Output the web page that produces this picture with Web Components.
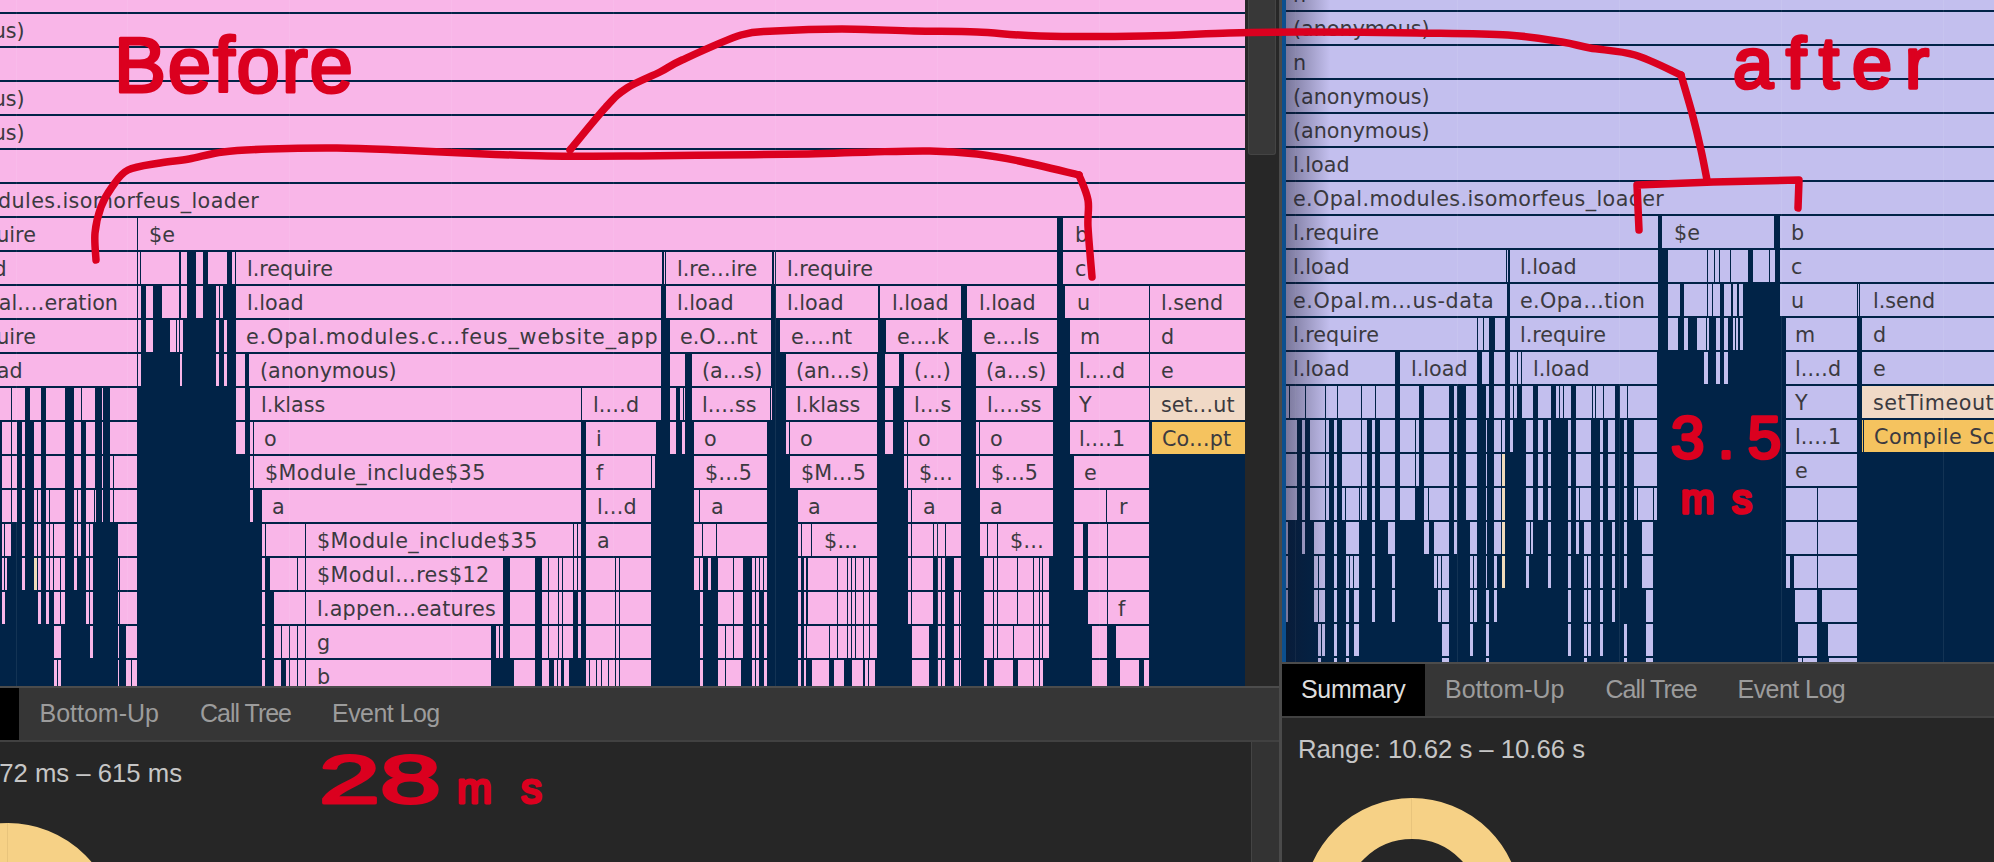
<!DOCTYPE html>
<html>
<head>
<meta charset="utf-8">
<title>Flame chart before and after</title>
<style>
  html, body { margin: 0; height: 100%; background: #262626; }
  body { display: flex; width: 1994px; height: 862px; overflow: hidden; position: relative; }
</style>
</head>
<body>

<perf-panel width="1279">
  <flame-chart slot="chart" height="686" shift="-20" origin="0" style="--bar:#f9b6e8">
    <flame-row spans="-120-1245"></flame-row>
    <flame-row spans="-120-1245@-112=(anonymous)"></flame-row>
    <flame-row spans="-120-1245"></flame-row>
    <flame-row spans="-120-1245@-112=(anonymous)"></flame-row>
    <flame-row spans="-120-1245@-112=(anonymous)"></flame-row>
    <flame-row spans="-120-1245"></flame-row>
    <flame-row spans="-120-1245@-112=e.Opal.modules.isomorfeus_loader"></flame-row>
    <flame-row spans="-120-137@-50=l.require 138-1057@149=$e 1063-1245@1075=b"></flame-row>
    <flame-row spans="-120-137@-50=l.load 138-140 141-179 181-187 196-203 208-227 232-235 236-662@247=l.require 664-665 666-772@677=l.re…ire 774-775 776-1057@787=l.require 1063-1245@1075=c"></flame-row>
    <flame-row spans="-120-137@-50=e.Opal.…eration 138-141 146-153 162-179 181-187 196-203 216-219 220-223 236-661@247=l.load 666-771@677=l.load 776-878@787=l.load 880-961@892=l.load 967-1057@979=l.load 1065-1149@1077=u 1150-1245@1161=l.send"></flame-row>
    <flame-row spans="-120-137@-50=l.require 138-141 146-153 170-176 177-179 180-183 216-219 224-227 236-661@246=e.Opal.modules.c…feus_website_app 670-771@680=e.O…nt 780-878@791=e.…nt 886-962@897=e.…k 972-1057@983=e.…ls 1070-1149@1080=m 1150-1245@1161=d"></flame-row>
    <flame-row spans="-120-137@-34=l.load 138-141 180-182 216-219 224-227 236-245 249-661@260=(anonymous) 670-685 692-771@702=(a…s) 786-877@796=(an…s) 885-899 904-961@914=(…) 976-1057@986=(a…s) 1070-1149@1079=l.…d 1150-1245@1161=e"></flame-row>
    <flame-row spans="0-11 12-25 30-41 46-65 74-81 82-95 102-103 110-137 236-245 250-581@261=l.klass 582-661@593=l.…d 670-676 680-683 684-685 692-770@702=l.…ss 771-772 786-877@796=l.klass 885-893 904-961@914=l…s 976-1053@987=l.…ss 1070-1149@1079=Y c:1150-1245@1161=set…ut"></flame-row>
    <flame-row spans="2-11 12-17 22-25 34-41 46-65 74-81 86-95 102-103 110-137 236-245 250-253 254-581@264=o 586-656@596=i 670-676 682-685 694-767@704=o 786-789 790-877@800=o 885-893 904-907 908-961@918=o 976-979 980-1053@990=o 1070-1149@1079=l.…1 o:1152-1245@1162=Co…pt"></flame-row>
    <flame-row spans="2-11 12-17 22-25 34-41 46-65 74-81 86-95 102-103 110-113 114-137 250-253 254-581@265=$Module_include$35 586-651@596=f 652-655 694-767@705=$…5 790-877@801=$M…5 904-907 908-961@919=$… 976-979 980-1053@991=$…5 1074-1149@1084=e"></flame-row>
    <flame-row spans="2-11 12-17 22-25 34-37 38-41 46-49 50-65 74-77 78-81 86-94 95-96 102-103 110-113 114-137 250-253 262-581@272=a 586-651@597=l…d 694-699 700-767@711=a 798-877@808=a 908-911 912-961@923=a 980-1053@990=a 1074-1106 1107-1149@1119=r"></flame-row>
    <flame-row spans="2-4 5-11 22-25 34-37 38-41 46-49 50-53 54-65 74-77 78-81 86-89 90-93 118-137 262-265 266-305 306-573@317=$Module_include$35 574-577 578-581 586-651@597=a 694-702 703-716 717-767 798-801 802-811 812-877@824=$… 908-911 912-933 934-937 938-945 946-961 980-987 988-997 998-1053@1010=$… 1074-1083 1088-1107 1108-1149"></flame-row>
    <flame-row spans="2-4 5-7 22-25 y:34-37 38-41 46-49 50-53 54-60 61-65 74-77 86-89 90-93 118-119 120-137 262-265 270-297 298-305 306-503@317=$Modul…res$12 510-535 542-548 549-558 559-562 563-573 574-577 578-581 586-615 616-619 620-651 694-699 700-703 708-711 718-733 734-743 752-755 756-759 760-763 764-767 798-801 804-806 808-837 838-847 848-851 852-855 856-863 864-869 870-877 908-911 912-933 938-941 942-945 954-961 984-993 994-997 998-1017 1018-1033 1034-1039 1040-1042 1043-1049 1074-1083 1088-1107 1108-1149"></flame-row>
    <flame-row spans="2-5 38-41 46-49 54-60 61-65 86-89 90-93 118-119 120-137 262-265 274-305 306-503@317=l.appen…eatures 510-535 542-548 549-558 559-562 563-573 578-581 586-615 616-619 620-651 700-703 718-733 734-743 752-755 756-759 764-767 798-801 804-806 808-837 838-847 848-851 852-855 856-863 864-869 870-877 908-911 912-933 938-941 942-945 954-959 960-961 984-993 994-997 998-1017 1018-1033 1034-1039 1040-1042 1043-1049 1088-1107 1108-1149@1118=f"></flame-row>
    <flame-row spans="54-61 90-93 118-119 126-137 262-265 274-281 282-289 290-297 298-305 306-491@317=g 496-499 500-503 510-535 542-548 549-558 559-562 563-573 578-581 586-615 616-619 620-651 700-703 718-725 726-733 734-743 752-755 756-759 764-767 798-801 804-806 807-829 830-837 838-847 848-851 852-855 856-863 864-869 870-877 912-929 938-941 942-945 954-959 960-961 984-993 994-997 998-1013 1014-1033 1034-1039 1040-1042 1043-1049 1092-1107 1116-1149"></flame-row>
    <flame-row spans="54-57 58-61 118-119 126-131 132-137 262-265 274-281 286-289 290-297 298-305 306-491@317=b 514-535 542-549 554-557 558-561 564-569 586-589 590-596 597-601 602-608 609-615 616-619 620-651 700-703 718-725 726-741 752-755 756-759 764-767 798-801 804-806 812-829 834-844 852-863 865-868 869-875 912-929 938-941 942-945 954-959 960-961 984-987 994-1013 1018-1033 1034-1039 1040-1043 1092-1107 1120-1139 1144-1149"></flame-row>
  </flame-chart>
  <scroll-track slot="scroll" thumb="155"></scroll-track>
  <tab-bar slot="tabs" height="52">
    <span class="stub"></span>
    <tab-item>Bottom-Up</tab-item>
    <tab-item style="letter-spacing:-1px">Call Tree</tab-item>
    <tab-item style="letter-spacing:-.55px">Event Log</tab-item>
  </tab-bar>
  <summary-pane slot="summary" side="left" range="Range: 572 ms – 615 ms"></summary-pane>
</perf-panel>

<split-line></split-line>

<perf-panel width="712">
  <flame-chart slot="chart" height="662" shift="-22" origin="1286" edge style="--bar:#c3bfee">
    <flame-row spans="1286-1994@1293=n"></flame-row>
    <flame-row spans="1286-1994@1293=(anonymous)"></flame-row>
    <flame-row spans="1286-1994@1293=n"></flame-row>
    <flame-row spans="1286-1994@1293=(anonymous)"></flame-row>
    <flame-row spans="1286-1994@1293=(anonymous)"></flame-row>
    <flame-row spans="1286-1994@1293=l.load"></flame-row>
    <flame-row spans="1286-1994@1293=e.Opal.modules.isomorfeus_loader"></flame-row>
    <flame-row spans="1286-1658@1293=l.require 1662-1774@1674=$e 1780-1994@1791=b"></flame-row>
    <flame-row spans="1286-1506@1293=l.load 1507-1508 1510-1658@1520=l.load 1668-1707 1708-1714 1715-1719 1720-1730 1731-1748 1753-1769 1770-1775 1780-1994@1791=c"></flame-row>
    <flame-row spans="1286-1507@1293=e.Opal.m…us-data 1510-1658@1520=e.Opa…tion 1668-1680 1684-1707 1708-1712 1713-1720 1724-1731 1733-1737 1739-1743 1780-1857@1791=u 1858-1859 1860-1994@1873=l.send"></flame-row>
    <flame-row spans="1286-1477@1293=l.require 1478-1483 1484-1489 1495-1505 1510-1658@1520=l.require 1668-1678 1684-1688 1697-1706 1707-1709 1716-1720 1724-1728 1733-1735 1736-1738 1740-1743 1786-1857@1795=m 1862-1994@1873=d"></flame-row>
    <flame-row spans="1286-1395@1293=l.load 1400-1477@1411=l.load 1482-1489 1494-1505 1510-1517 1518-1521 1522-1657@1533=l.load 1704-1708 1716-1720 1724-1728 1786-1857@1795=l.…d 1862-1994@1873=e"></flame-row>
    <flame-row spans="1286-1289 1290-1305 1306-1325 1326-1337 1338-1361 1362-1375 1376-1395 1400-1419 1424-1449 1454-1457 1466-1477 1486-1489 1494-1505 1510-1513 1514-1517 1522-1533 1538-1551 1556-1559 1560-1563 1564-1571 1576-1592 1593-1595 1596-1603 1604-1615 1620-1627 1628-1657 1786-1857@1795=Y c:1862-1994@1873=setTimeout"></flame-row>
    <flame-row spans="1286-1297 1302-1305 1310-1325 1326-1329 1334-1337 1342-1361 1362-1367 1372-1375 1380-1395 1400-1415 1416-1419 1424-1449 1454-1457 1466-1477 1486-1487 1494-1501 1502-1505 1510-1513 1526-1533 1538-1543 1548-1551 1568-1571 1576-1591 1600-1603 1608-1615 1624-1627 1634-1657 1786-1857@1795=l.…1 o:1862-1863 o:1864-1994@1874=Compile~Script"></flame-row>
    <flame-row spans="1286-1297 1302-1305 1310-1325 1326-1329 1334-1337 1342-1361 1362-1367 1372-1375 1380-1395 1400-1415 1416-1419 1424-1449 1454-1457 1466-1477 1486-1487 1494-1501 y:1502-1505 1526-1533 1538-1543 1548-1551 1568-1571 1576-1591 1600-1603 1608-1615 1624-1627 1634-1657 1786-1857@1795=e"></flame-row>
    <flame-row spans="1286-1297 1302-1305 1310-1325 1326-1329 1334-1337 1342-1345 1346-1359 1360-1361 1362-1367 1372-1375 1380-1395 1400-1415 1424-1428 1429-1449 1454-1457 1466-1477 1486-1487 1494-1501 y:1502-1505 1526-1533 1538-1543 1548-1551 1568-1571 1576-1579 1580-1591 1600-1603 1608-1615 1624-1627 1634-1637 1638-1653 1654-1657 1786-1817 1818-1857"></flame-row>
    <flame-row spans="1286-1288 1302-1305 1314-1325 1334-1337 1346-1359 1372-1375 1388-1395 1424-1429 1434-1449 1454-1457 1470-1477 1486-1487 1494-1501 y:1502-1505 1526-1530 1531-1533 1548-1551 1568-1571 1576-1579 1584-1591 1600-1603 1612-1615 1624-1627 1642-1653 1786-1817 1818-1857"></flame-row>
    <flame-row spans="1286-1288 1314-1318 1319-1325 1334-1337 1346-1349 1350-1353 1354-1359 1372-1375 1392-1395 1434-1437 1438-1441 1442-1449 1470-1473 1474-1477 1486-1487 1494-1497 y:1502-1505 1526-1529 1548-1551 1568-1571 1584-1587 1588-1591 1600-1603 1612-1615 1624-1627 1642-1653 1786-1790 1794-1817 1818-1857"></flame-row>
    <flame-row spans="1286-1288 1314-1318 1319-1325 1334-1337 1346-1349 1354-1359 1372-1375 1392-1395 1438-1441 1442-1449 1470-1473 1474-1477 1486-1489 1494-1497 1568-1571 1584-1587 1588-1591 1600-1603 1612-1615 1646-1653 1795-1817 1822-1857"></flame-row>
    <flame-row spans="1318-1321 1322-1325 1334-1337 1346-1349 1354-1359 1442-1449 1470-1473 1486-1489 1568-1571 1584-1587 1588-1591 1600-1603 1624-1627 1646-1653 1798-1817 1828-1857"></flame-row>
    <flame-row spans="1318-1321 1334-1337 1346-1349 1442-1449 1486-1489 1584-1587 1624-1627 1646-1653 1798-1802 1803-1817 1829-1857"></flame-row>
  </flame-chart>
  <tab-bar slot="tabs" height="52">
    <tab-item active style="letter-spacing:-.35px">Summary</tab-item>
    <tab-item>Bottom-Up</tab-item>
    <tab-item style="letter-spacing:-1px">Call Tree</tab-item>
    <tab-item style="letter-spacing:-.55px">Event Log</tab-item>
  </tab-bar>
  <summary-pane slot="summary" side="right" range="Range: 10.62 s – 10.66 s"></summary-pane>
</perf-panel>

<ink-notes></ink-notes>

<script>
// the chart font runs narrower than the original on long names
const TRACKING = {
  'e.Opal.modules.isomorfeus_loader': .39,
  'e.Opal.modules.c…feus_website_app': .85,
  '$Module_include$35': .42,
  '$Modul…res$12': .4,
  'l.appen…eatures': .2,
  'e.Opal.m…us-data': .55,
  'e.Opa…tion': .35,
  'Compile Script': .5,
  'setTimeout': .5
};

class PerfPanel extends HTMLElement {
  connectedCallback() {
    if (this.shadowRoot) return;
    this.attachShadow({ mode: 'open' });
    this.shadowRoot.innerHTML = `
      <style>
        :host { display: flex; flex-direction: column; flex: none; height: 862px; overflow: hidden; width: ${this.getAttribute('width')}px; }
        .top { display: flex; flex: none; }
      </style>
      <div class="top"><slot name="chart"></slot><slot name="scroll"></slot></div>
      <slot name="tabs"></slot>
      <slot name="summary"></slot>`;
  }
}

class FlameChart extends HTMLElement {
  connectedCallback() {
    if (this.shadowRoot) return;
    const edge = this.hasAttribute('edge');
    this.attachShadow({ mode: 'open' });
    // the faint time grid and the drop shadow lie over the bars
    this.shadowRoot.innerHTML = `
      <style>
        :host {
          display: block; flex: 1; min-width: 0; position: relative; overflow: hidden;
          height: ${this.getAttribute('height')}px;
          background: #012347;
          box-sizing: border-box;
          ${edge ? 'border-left: 4px solid #0c4f8e;' : ''}
        }
        .rows { margin-top: ${this.getAttribute('shift')}px; }
        .grid {
          position: absolute; inset: 0; pointer-events: none;
          background: repeating-linear-gradient(90deg,
            rgba(255,255,255,.07) 0 1px, transparent 1px 162px);
          background-position: ${edge ? '9px' : '127px'} 0;
        }
        .shade {
          position: absolute; top: 0; bottom: 0; left: 0; width: 44px; pointer-events: none;
          background: linear-gradient(90deg, rgba(20,20,40,.42), rgba(20,20,40,0));
        }
      </style>
      <div class="rows"><slot></slot></div>
      <div class="grid"></div>
      ${edge ? '<div class="shade"></div>' : ''}`;
  }
}

class FlameRow extends HTMLElement {
  connectedCallback() {
    if (this.shadowRoot) return;
    const origin = Number(this.parentElement.getAttribute('origin'));
    const spans = this.getAttribute('spans').trim().split(/\s+/);
    let cursor = origin;
    let html = '';
    for (const s of spans) {
      const m = s.match(/^(?:([cyo]):)?(-?\d+)-(\d+)(?:@(-?\d+)=(.*))?$/);
      const a = Number(m[2]), b = Number(m[3]);
      const kind = m[1] || '';
      const label = m[5] ? m[5].replace(/~/g, ' ') : '';
      const pad = m[4] ? Number(m[4]) - a : 0;
      const track = TRACKING[label] || 0;
      html += `<div class="bar ${kind}" style="margin-left:${a - cursor}px;width:${b - a}px;padding-left:${pad}px;letter-spacing:${track}px">${label}</div>`;
      cursor = b;
    }
    this.attachShadow({ mode: 'open' });
    this.shadowRoot.innerHTML = `
      <style>
        :host { display: flex; height: 32px; margin-bottom: 2px; }
        .bar {
          flex: none; box-sizing: border-box; height: 32px; overflow: hidden; white-space: nowrap;
          background: var(--bar); color: #3b3a40;
          font: 20.7px/35px "DejaVu Sans", sans-serif;
        }
        .c { background: #f0d9c6; }
        .o { background: #f5c35f; }
        .y { background: #f1dcbc; }
      </style>
      ${html}`;
  }
}

class ScrollTrack extends HTMLElement {
  connectedCallback() {
    if (this.shadowRoot) return;
    this.attachShadow({ mode: 'open' });
    this.shadowRoot.innerHTML = `
      <style>
        :host { display: block; flex: none; width: 34px; box-sizing: border-box; padding: 0 3px; background: #272727; }
        .thumb { height: ${this.getAttribute('thumb')}px; background: #383838; border: 1px solid #444; border-top: 0; border-radius: 0 0 3px 3px; box-sizing: border-box; }
      </style>
      <div class="thumb"></div>`;
  }
}

class TabBar extends HTMLElement {
  connectedCallback() {
    if (this.shadowRoot) return;
    this.attachShadow({ mode: 'open' });
    this.shadowRoot.innerHTML = `
      <style>
        :host {
          display: flex; flex: none; height: ${this.getAttribute('height')}px;
          background: #363636;
          border-top: 2px solid #4c4c4c; border-bottom: 2px solid #414141;
        }
        ::slotted(.stub) { flex: none; width: 19px; background: #000; }
      </style>
      <slot></slot>`;
  }
}

class TabItem extends HTMLElement {
  connectedCallback() {
    if (this.shadowRoot) return;
    this.attachShadow({ mode: 'open' });
    this.shadowRoot.innerHTML = `
      <style>
        :host {
          display: flex; align-items: center; flex: none; padding: 0 20.5px 2px;
          font: 25px "Liberation Sans", Arial, sans-serif; color: #9c9c9c;
        }
        :host([active]) { background: #000; color: #dedede; padding: 0 19px 2px; }
      </style>
      <slot></slot>`;
  }
}

class SummaryPane extends HTMLElement {
  connectedCallback() {
    if (this.shadowRoot) return;
    const left = this.getAttribute('side') === 'left';
    this.attachShadow({ mode: 'open' });
    this.shadowRoot.innerHTML = `
      <style>
        :host { display: flex; flex: 1; background: #262626; overflow: hidden; min-height: 0; }
        .body { flex: 1; min-width: 0; padding-top: 16px; }
        .range {
          font: 25.7px/30px "Liberation Sans", Arial, sans-serif; color: #c6c6c6; white-space: nowrap;
          margin-left: ${left ? '-105px' : '16px'};
        }
        .donut {
          width: 218px; height: 218px; box-sizing: border-box; border-radius: 50%;
          border: 41px solid #f6d186; position: relative;
          margin: ${left ? '35px 0 0 -101px' : '34px 0 0 21px'};
        }
        .donut::after { content: ""; position: absolute; left: 67px; top: -41px; width: 1px; height: 41px; background: #e8c47c; }
        .bar { flex: none; width: 27px; background: #333; border-left: 1px solid #444; }
      </style>
      <div class="body">
        <div class="range">${this.getAttribute('range')}</div>
        <div class="donut"></div>
      </div>
      ${left ? '<div class="bar"></div>' : ''}`;
  }
}

class SplitLine extends HTMLElement {
  connectedCallback() {
    if (this.shadowRoot) return;
    this.attachShadow({ mode: 'open' });
    this.shadowRoot.innerHTML = `
      <style>
        :host { display: block; flex: none; width: 3px; height: 862px; background: #4a4a4a; }
      </style>`;
  }
}

// catmull-rom through the traced points, so the marker lines stay soft
function smooth(pts) {
  let d = `M${pts[0][0]} ${pts[0][1]}`;
  for (let i = 0; i < pts.length - 1; i++) {
    const p0 = pts[i - 1] || pts[i], p1 = pts[i], p2 = pts[i + 1], p3 = pts[i + 2] || p2;
    const c1 = [p1[0] + (p2[0] - p0[0]) / 6, p1[1] + (p2[1] - p0[1]) / 6];
    const c2 = [p2[0] - (p3[0] - p1[0]) / 6, p2[1] - (p3[1] - p1[1]) / 6];
    d += ` C${c1[0]} ${c1[1]} ${c2[0]} ${c2[1]} ${p2[0]} ${p2[1]}`;
  }
  return d;
}

const LEFT_BRACE = [[96,260],[95,233],[101,207],[112,187],[128,170],[160,163],[189,159],[223,152],[269,149],[337,148],[400,150],[463,153],[547,156],[640,156],[724,155],[808,154],[871,152],[930,151],[977,154],[1019,161],[1079,175]];
const LEFT_DROP = [[1079,175],[1088,200],[1088,227],[1092,277]];
const LINK = [[570,150],[606,107],[627,88],[660,72],[682,60],[741,35],[775,31],[842,29],[914,31],[977,32],[1040,36],[1145,36],[1229,33],[1300,32],[1417,33],[1508,35],[1562,42],[1590,48],[1635,55],[1681,75]];
const LINK_DROP = [[1681,75],[1692,113],[1701,150],[1707,180]];

// red marker scribbles drawn over the whole screenshot
class InkNotes extends HTMLElement {
  connectedCallback() {
    if (this.shadowRoot) return;
    this.attachShadow({ mode: 'open' });
    this.shadowRoot.innerHTML = `
      <style>
        :host { position: absolute; inset: 0; display: block; pointer-events: none; }
        svg { display: block; }
        path { fill: none; stroke: #db001f; stroke-width: 7.5; stroke-linecap: round; stroke-linejoin: round; }
        text { fill: #db001f; stroke: #db001f; stroke-linejoin: round; font-family: "Liberation Sans", Arial, sans-serif; }
      </style>
      <svg width="1994" height="862" viewBox="0 0 1994 862">
        <path d="${smooth(LEFT_BRACE)}"/>
        <path d="${smooth(LEFT_DROP)}"/>
        <path d="${smooth(LINK)}"/>
        <path d="${smooth(LINK_DROP)}"/>
        <path d="M1639 230 L1637 185 L1713 182 L1799 180 L1798 208"/>
        <text x="114" y="92" font-size="78" stroke-width="3" textLength="239">Before</text>
        <text x="1733" y="88" font-size="72" stroke-width="3.5" textLength="196">after</text>
        <text x="319" y="803" font-size="68" stroke-width="3" textLength="122" lengthAdjust="spacingAndGlyphs">28</text>
        <text x="457" y="803" font-size="42" stroke-width="3" textLength="85">ms</text>
        <text x="1671" y="458" font-size="60" stroke-width="3.5" textLength="110">3.5</text>
        <text x="1681" y="513" font-size="40" stroke-width="3.5" textLength="71">ms</text>
      </svg>`;
  }
}

customElements.define('perf-panel', PerfPanel);
customElements.define('flame-chart', FlameChart);
customElements.define('flame-row', FlameRow);
customElements.define('scroll-track', ScrollTrack);
customElements.define('tab-bar', TabBar);
customElements.define('tab-item', TabItem);
customElements.define('summary-pane', SummaryPane);
customElements.define('split-line', SplitLine);
customElements.define('ink-notes', InkNotes);
</script>
</body>
</html>
